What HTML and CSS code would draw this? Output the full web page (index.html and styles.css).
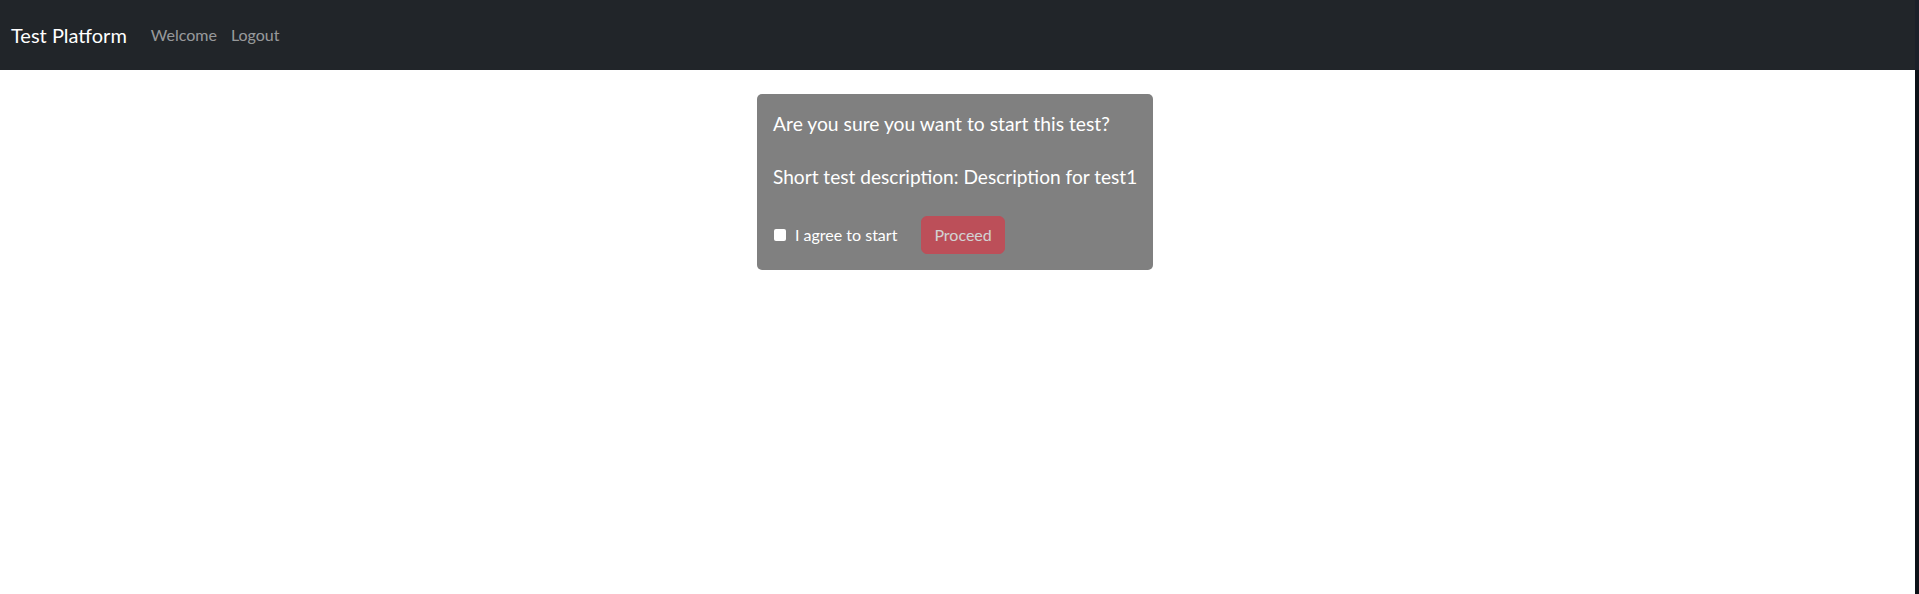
FILE: index.html
```html
<!DOCTYPE html>
<html lang="en">
<head>
<meta charset="utf-8">
<title>Test Platform</title>
<link rel="stylesheet" href="styles.css">
</head>
<body>
<div class="page">
  <nav class="navbar">
    <a class="brand" href="#">Test Platform</a>
    <ul class="nav">
      <li><a class="nav-link" href="#">Welcome</a></li>
      <li><a class="nav-link" href="#">Logout</a></li>
    </ul>
  </nav>
  <main class="main">
    <div class="card">
      <h5 class="title">Are you sure you want to start this test?</h5>
      <h5 class="desc">Short test description: Description for test1</h5>
      <div class="actions">
        <label class="agree"><span class="box"></span>I agree to start</label>
        <button class="btn" disabled>Proceed</button>
      </div>
    </div>
  </main>
</div>
<div class="edge"><div class="edge-top"></div></div>
</body>
</html>
```
FILE: styles.css
```css
* { box-sizing: border-box; }
html, body { margin: 0; padding: 0; height: 100%; }
body {
  display: flex;
  font-family: Lato, "Open Sans", sans-serif;
  background: #fff;
  overflow: hidden;
}
.page { flex: 1; display: flex; flex-direction: column; }
.edge { width: 4px; background: #0d1117; display: flex; flex-direction: column; }
.edge-top { height: 70px; background: #1b2028; }
.navbar {
  height: 70px;
  background: #212529;
  display: flex;
  align-items: center;
  padding: 0 11px;
}
.brand {
  color: #fff;
  font-size: 20px;
  text-decoration: none;
  margin-right: 17px;
  line-height: 30px;
}
.nav { list-style: none; margin: 0; padding: 0; display: flex; }
.nav-link {
  color: rgba(255,255,255,.55);
  text-decoration: none;
  font-size: 16px;
  line-height: 24px;
  padding: 8px 7px;
  display: block;
}
.main {
  flex: 1;
  display: flex;
  justify-content: center;
  align-items: flex-start;
  padding: 24px 5px 0 0;
}
.card {
  width: 396px;
  background: #808080;
  border-radius: 5px;
  padding: 16px;
  color: #fff;
}
.title, .desc {
  margin: 0;
  font-size: 19.3px;
  font-weight: 400;
  line-height: 24px;
  white-space: nowrap;
}
.title { margin-top: 2px; }
.desc { margin-top: 29px; font-size: 19.1px; }
.actions {
  margin-top: 27px;
  display: flex;
  align-items: center;
  gap: 24px;
}
.agree {
  display: flex;
  align-items: center;
  font-size: 16px;
  line-height: 24px;
}
.box {
  width: 12px; height: 12px;
  background: #fff;
  border-radius: 2px;
  margin: 0 9px 0 1px;
}
.btn {
  font-family: inherit;
  font-size: 16px;
  line-height: 24px;
  padding: 6px 12px;
  border: 1px solid #dc3545;
  border-radius: 6px;
  background: #dc3545;
  color: #fff;
  opacity: .65;
}
```
